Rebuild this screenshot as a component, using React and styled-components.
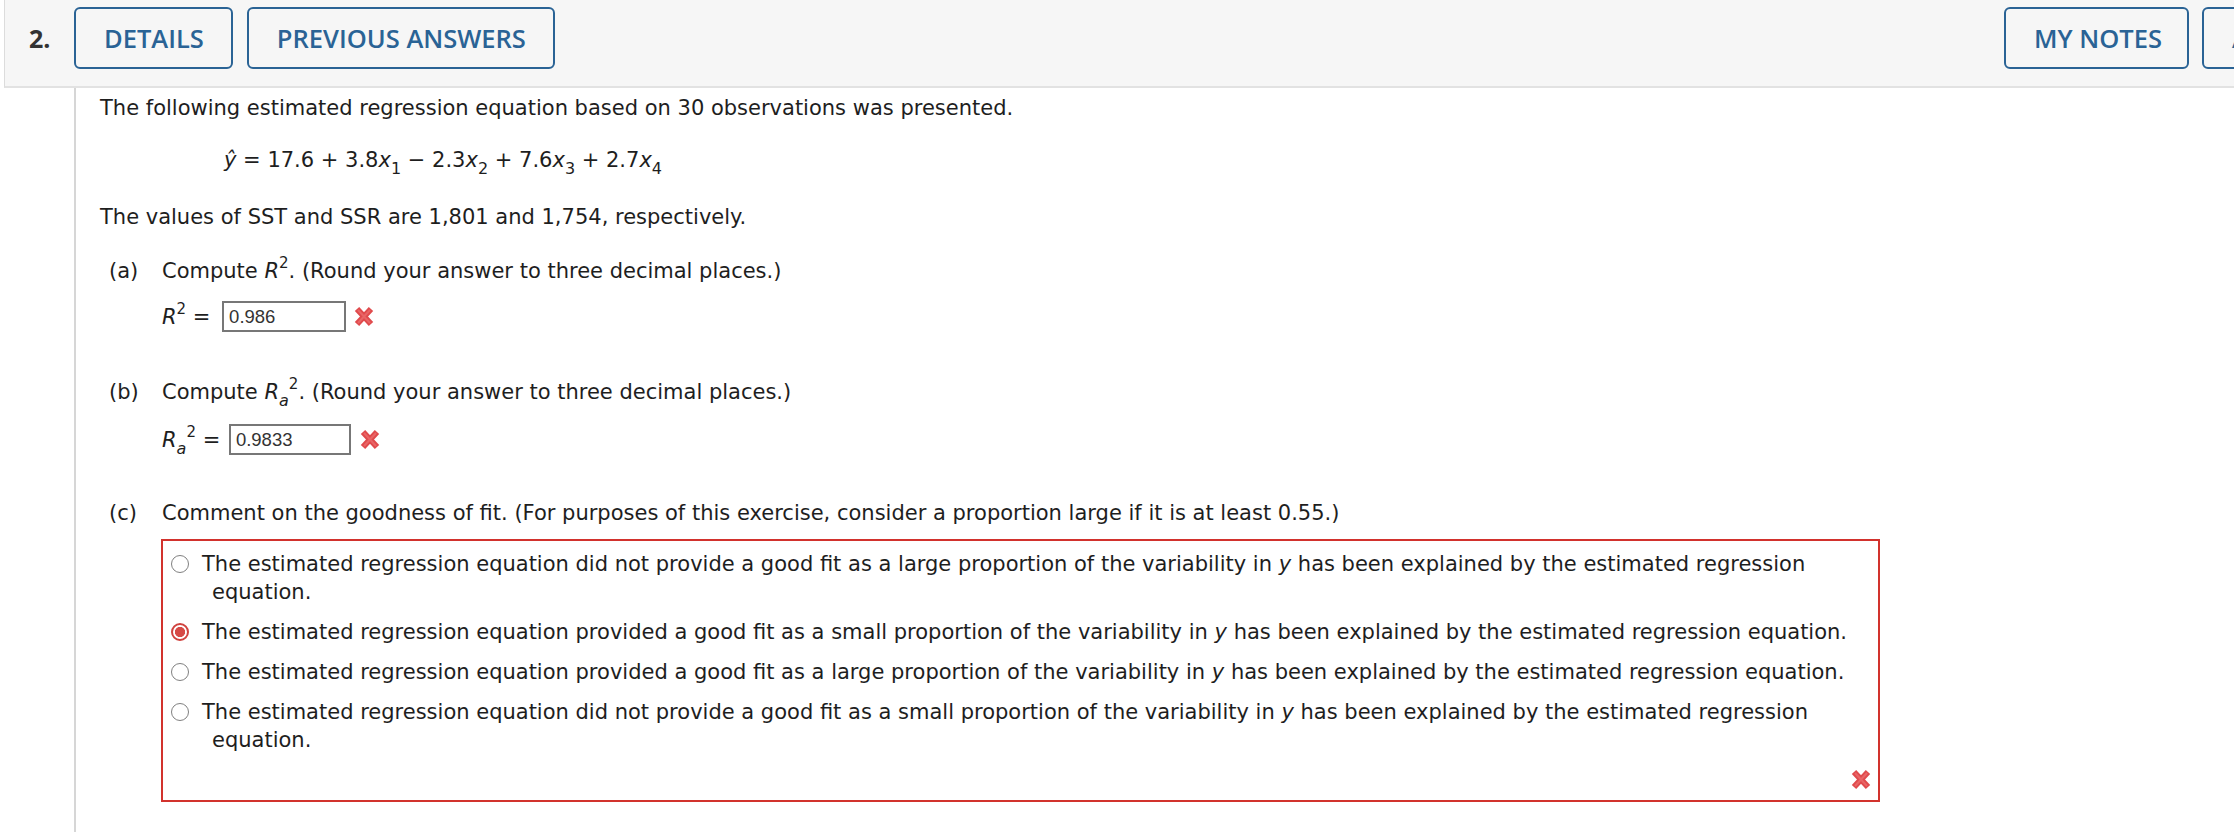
import React from 'react';
import styled, { createGlobalStyle } from 'styled-components';

const Global = createGlobalStyle`
  html, body { margin: 0; padding: 0; background: #fff; overflow: hidden; }
  body { font-family: "DejaVu Sans", Verdana, sans-serif; color: #1e1e1e; }
`;

const Page = styled.div`
  width: 2560px;
`;

const Header = styled.header`
  display: flex;
  align-items: flex-start;
  box-sizing: border-box;
  width: 2548px;
  height: 88px;
  margin-left: 4px;
  padding: 7px 13px 0 24px;
  background: #f6f6f6;
  border-left: 1px solid #dcdcdc;
  border-bottom: 2px solid #e2e2e2;
`;

const QNum = styled.div`
  width: 45px;
  font-family: "Open Sans", sans-serif;
  font-weight: 700;
  font-size: 25px;
  line-height: 62px;
  color: #333;
`;

const HeadButton = styled.button`
  display: flex;
  align-items: center;
  justify-content: flex-start;
  flex: none;
  box-sizing: border-box;
  height: 62px;
  width: ${(p) => (p.$w ? `${p.$w}px` : 'auto')};
  padding: 0 27px 0 28px;
  margin-right: ${(p) => (p.$gap === undefined ? 14 : p.$gap)}px;
  background: transparent;
  border: 2px solid #2a6395;
  border-radius: 6px;
  font-family: "Open Sans", sans-serif;
  font-weight: 600;
  font-size: 25.5px;
  color: #2a6395;
  white-space: nowrap;
`;

const Spacer = styled.div`
  flex: 1;
`;

const Body = styled.main`
  margin-left: 74px;
  border-left: 2px solid #d6d6d6;
  padding: 6px 0 40px 24px;
  min-height: 760px;
  font-size: 21px;
  line-height: 28px;
`;

const Para = styled.p`
  margin: ${(p) => p.$top || 0}px 0 0 0;
`;

const Equation = styled.div`
  margin: 24px 0 0 124px;
`;

const Var = styled.i`
  font-style: italic;
`;

const Sup = styled.span`
  font-size: 15px;
  line-height: 0;
  vertical-align: 10px;
`;

const Sub = styled.span`
  font-size: 16px;
  line-height: 0;
  vertical-align: -7px;
`;

const Part = styled.section`
  display: flex;
  margin: ${(p) => p.$top}px 0 0 9px;
`;

const PartLabel = styled.div`
  width: 53px;
  flex: none;
`;

const PartContent = styled.div`
  flex: 1;
`;

const AnswerRow = styled.div`
  display: flex;
  align-items: center;
  height: 31px;
  margin-top: ${(p) => p.$top}px;
`;

const Symbol = styled.span`
  white-space: pre;
`;

const AnswerBox = styled.div`
  box-sizing: border-box;
  width: ${(p) => p.$w}px;
  height: 31px;
  margin-left: ${(p) => p.$left}px;
  padding: 0 5px;
  border: 2px solid #777;
  font-family: "Liberation Sans", Arial, sans-serif;
  font-size: 18.5px;
  line-height: 27px;
  color: #333;
`;

const WrongIcon = styled.svg`
  flex: none;
  width: 22px;
  height: 21px;
  margin-left: ${(p) => p.$left || 0}px;
`;

const XMark = ({ left }) => (
  <WrongIcon $left={left} viewBox="0 0 22 21">
    <path d="M4 3 L18 18 M18 3 L4 18" stroke="#e04a4c" strokeWidth="6" strokeLinecap="butt" />
    <path d="M5 4 L17 17 M17 4 L5 17" stroke="#f28080" strokeWidth="2" opacity="0.5" />
  </WrongIcon>
);

const ChoiceBox = styled.div`
  box-sizing: border-box;
  width: 1719px;
  margin: 12px 0 0 -1px;
  padding: 9px 6px 8px 8px;
  border: 2px solid #d2322d;
`;

const Option = styled.label`
  display: flex;
  align-items: flex-start;
  margin-top: ${(p) => (p.$first ? 0 : 12)}px;
`;

const Radio = styled.span`
  flex: none;
  box-sizing: border-box;
  width: 18px;
  height: 18px;
  margin: 5px 23px 0 0;
  border-radius: 50%;
  border: ${(p) => (p.$on ? '2px solid #d0433f' : '1.5px solid #808080')};
  background: ${(p) =>
    p.$on ? 'radial-gradient(circle, #d64a46 0 4.8px, #fff 5.4px)' : '#fff'};
`;

const OptionText = styled.span`
  max-width: 1643px;
  text-indent: -10px;
`;

const FeedbackRow = styled.div`
  display: flex;
  justify-content: flex-end;
  margin-top: 15px;
  height: 23px;
`;

const options = [
  { text: ['The estimated regression equation did not provide a good fit as a large proportion of the variability in ', ' has been explained by the estimated regression equation.'] },
  { on: true, text: ['The estimated regression equation provided a good fit as a small proportion of the variability in ', ' has been explained by the estimated regression equation.'] },
  { text: ['The estimated regression equation provided a good fit as a large proportion of the variability in ', ' has been explained by the estimated regression equation.'] },
  { text: ['The estimated regression equation did not provide a good fit as a small proportion of the variability in ', ' has been explained by the estimated regression equation.'] },
];

export default function App() {
  return (
    <Page>
      <Global />
      <Header>
        <QNum>2.</QNum>
        <HeadButton>DETAILS</HeadButton>
        <HeadButton>PREVIOUS ANSWERS</HeadButton>
        <Spacer />
        <HeadButton $gap={13} $w={185}>MY NOTES</HeadButton>
        <HeadButton $gap={0} $w={337}>ASK YOUR TEACHER</HeadButton>
      </Header>
      <Body>
        <Para>The following estimated regression equation based on 30 observations was presented.</Para>
        <Equation>
          <Var>ŷ</Var> = 17.6 + 3.8<Var>x</Var><Sub>1</Sub> − 2.3<Var>x</Var><Sub>2</Sub> + 7.6<Var>x</Var><Sub>3</Sub> + 2.7<Var>x</Var><Sub>4</Sub>
        </Equation>
        <Para $top={29}>The values of SST and SSR are 1,801 and 1,754, respectively.</Para>

        <Part $top={26}>
          <PartLabel>(a)</PartLabel>
          <PartContent>
            <div>
              Compute <Var>R</Var><Sup>2</Sup>. (Round your answer to three decimal places.)
            </div>
            <AnswerRow $top={16}>
              <Symbol>
                <Var>R</Var><Sup>2</Sup>{' = '}
              </Symbol>
              <AnswerBox $w={124} $left={5}>0.986</AnswerBox>
              <XMark left={7} />
            </AnswerRow>
          </PartContent>
        </Part>

        <Part $top={46}>
          <PartLabel>(b)</PartLabel>
          <PartContent>
            <div>
              Compute <Var>R</Var><Sub><Var>a</Var></Sub><Sup>2</Sup>. (Round your answer to three decimal places.)
            </div>
            <AnswerRow $top={18}>
              <Symbol>
                <Var>R</Var><Sub><Var>a</Var></Sub><Sup>2</Sup>{' = '}
              </Symbol>
              <AnswerBox $w={122} $left={2}>0.9833</AnswerBox>
              <XMark left={8} />
            </AnswerRow>
          </PartContent>
        </Part>

        <Part $top={44}>
          <PartLabel>(c)</PartLabel>
          <PartContent>
            <div>
              Comment on the goodness of fit. (For purposes of this exercise, consider a proportion large if it is at least 0.55.)
            </div>
            <ChoiceBox>
              {options.map((o, i) => (
                <Option key={i} $first={i === 0}>
                  <Radio $on={o.on} />
                  <OptionText>
                    {o.text[0]}
                    <Var>y</Var>
                    {o.text[1]}
                  </OptionText>
                </Option>
              ))}
              <FeedbackRow>
                <XMark />
              </FeedbackRow>
            </ChoiceBox>
          </PartContent>
        </Part>
      </Body>
    </Page>
  );
}
